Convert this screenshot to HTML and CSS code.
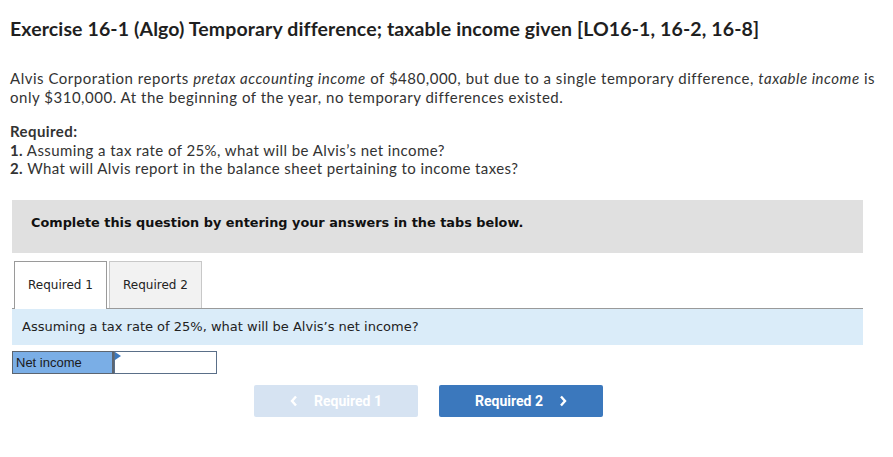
FILE: index.html
```html
<!DOCTYPE html>
<html>
<head>
<meta charset="utf-8">
<link rel="stylesheet" href="styles.css">
</head>
<body>
<div class="page">
  <h1 class="title">Exercise 16-1 (Algo) Temporary difference; taxable income given [LO16-1, 16-2, 16-8]</h1>
  <p class="intro">Alvis Corporation reports <em>pretax accounting income</em> of $480,000, but due to a single temporary difference, <em>taxable income</em> is only $310,000. At the beginning of the year, no temporary differences existed.</p>
  <div class="required">
    <div class="req-head">Required:</div>
    <div><b>1.</b> Assuming a tax rate of 25%, what will be Alvis’s net income?</div>
    <div><b>2.</b> What will Alvis report in the balance sheet pertaining to income taxes?</div>
  </div>
  <div class="work">
    <div class="notice">Complete this question by entering your answers in the tabs below.</div>
    <div class="tabs">
      <div class="tab active">Required 1</div>
      <div class="tab">Required 2</div>
    </div>
    <div class="panel">Assuming a tax rate of 25%, what will be Alvis’s net income?</div>
    <div class="answer">
      <div class="label">Net income</div>
      <div class="input"><span class="marker"></span></div>
    </div>
    <div class="nav">
      <div class="btn prev"><svg class="chev" width="8" height="12" viewBox="0 0 8 12"><path d="M6 1.5 L2 6 L6 10.5" fill="none" stroke="#fff" stroke-width="2.4"/></svg>Required 1</div>
      <div class="btn next">Required 2<svg class="chev" width="8" height="12" viewBox="0 0 8 12"><path d="M2 1.5 L6 6 L2 10.5" fill="none" stroke="#fff" stroke-width="2.4"/></svg></div>
    </div>
  </div>
</div>
</body>
</html>
```
FILE: styles.css
```css
html, body { margin: 0; padding: 0; background: #fff; }
.page { padding: 0 10px 0 10px; color: #2a2a2a; }
.title {
  font-family: Lato, "Liberation Sans", sans-serif;
  font-weight: 700;
  font-size: 19.5px;
  letter-spacing: 0.12px;
  line-height: 24px;
  margin: 0;
  padding-top: 17px;
  color: #1f1f1f;
}
.intro {
  font-family: Lato, "Liberation Sans", sans-serif;
  font-size: 15px;
  letter-spacing: 0.52px;
  line-height: 19px;
  margin: 28px 0 0 0;
  color: #333;
}
.intro em { font-style: italic; }
.required {
  font-family: Lato, "Liberation Sans", sans-serif;
  font-size: 15px;
  letter-spacing: 0.42px;
  line-height: 18.5px;
  margin-top: 15px;
  color: #333;
}
.req-head { font-weight: 700; }
.work { margin: 22px 20px 0 2px; }
.notice {
  background: #e0e0e0;
  height: 53px;
  box-sizing: border-box;
  padding-bottom: 8px;
  display: flex;
  align-items: center;
  padding-left: 19px;
  font-family: "DejaVu Sans", Verdana, sans-serif;
  font-weight: 700;
  font-size: 12.85px;
  color: #111;
}
.tabs {
  display: flex;
  gap: 2px;
  margin-top: 8px;
  padding-left: 2px;
  border-bottom: 1px solid #9a9a9a;
}
.tab {
  width: 91px;
  height: 46px;
  display: flex;
  align-items: center;
  justify-content: center;
  border: 1px solid #c8c8c8;
  border-bottom: none;
  background: #f2f2f2;
  font-family: "DejaVu Sans", Verdana, sans-serif;
  font-size: 12px;
  color: #222;
}
.tab.active {
  background: #fff;
  border-color: #9a9a9a;
  margin-bottom: -1px;
  height: 47px;
}
.panel {
  background: #daecf9;
  height: 36px;
  display: flex;
  align-items: center;
  padding-left: 10px;
  font-family: "DejaVu Sans", Verdana, sans-serif;
  font-size: 13px;
  color: #222;
}
.answer {
  display: flex;
  margin-top: 6px;
  height: 23px;
}
.label {
  width: 96px;
  background: #7aaee6;
  border: 1px solid #5c6570;
  border-right-width: 2px;
  font-family: "Liberation Sans", Arial, sans-serif;
  font-size: 13px;
  line-height: 21px;
  padding-left: 3px;
  color: #1a1a1a;
}
.input {
  width: 101px;
  background: #fff;
  border: 1px solid #5a6f88;
  position: relative;
}
.marker {
  position: absolute;
  left: 0; top: 0;
  width: 0; height: 0;
  border-top: 4px solid transparent;
  border-bottom: 4px solid transparent;
  border-left: 6px solid #3b78bd;
}
.nav {
  display: flex;
  gap: 21px;
  margin-top: 11px;
  padding-left: 242px;
}
.btn {
  width: 164px;
  height: 32px;
  border-radius: 2px;
  display: flex;
  align-items: center;
  justify-content: center;
  font-family: Roboto, "Liberation Sans", sans-serif;
  font-weight: 700;
  font-size: 14px;
  color: #fff;
}
.btn.prev { background: #d6e3f2; }
.btn.next { background: #3b78bd; }
.prev .chev { margin-right: 16px; }
.next .chev { margin-left: 16px; }
```
